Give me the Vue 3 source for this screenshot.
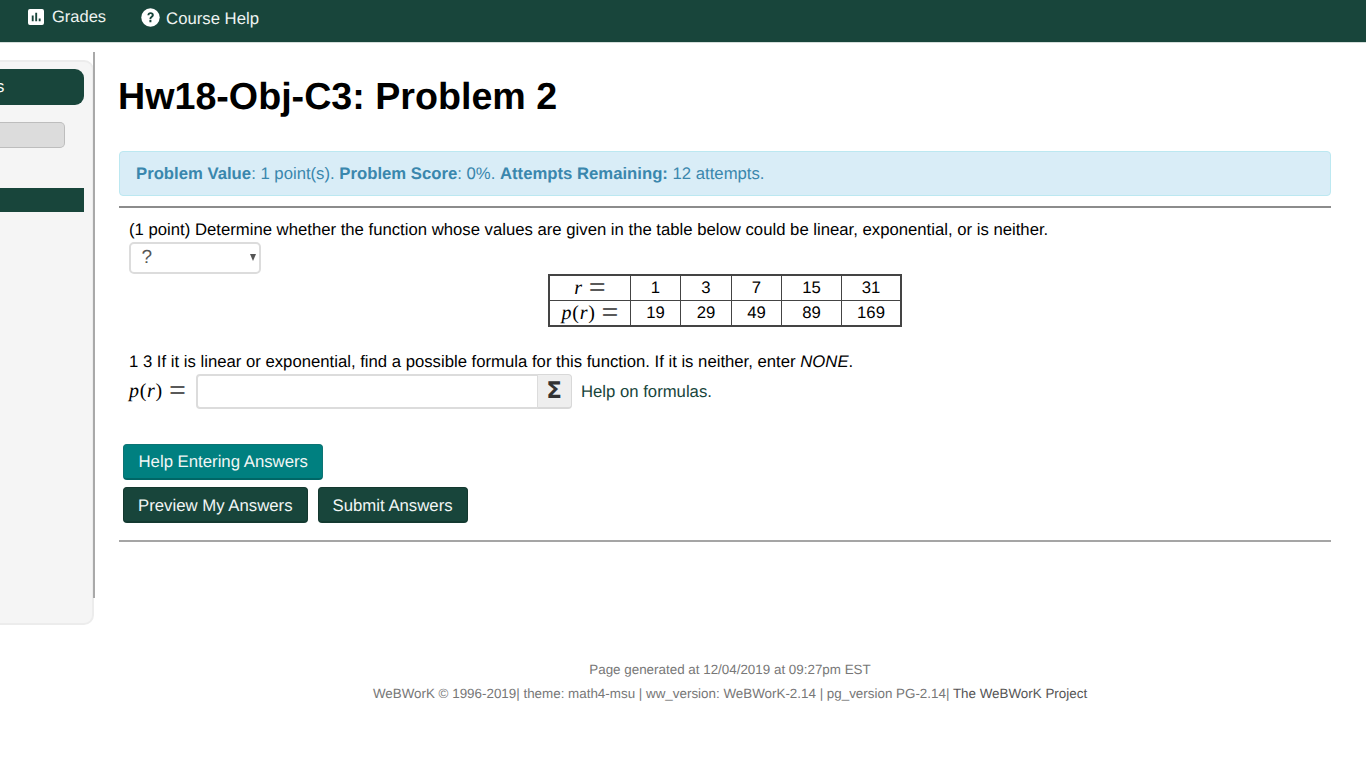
<script setup>
const cols = [
  ['1', '19'],
  ['3', '29'],
  ['7', '49'],
  ['15', '89'],
  ['31', '169'],
]
</script>

<template>
  <div class="page">
    <header class="topbar">
      <a class="nav nav-grades">
        <svg class="ico" width="16" height="16" viewBox="0 0 17 17">
          <path fill="#fff" fill-rule="evenodd" d="M2 0h13a2 2 0 0 1 2 2v13a2 2 0 0 1-2 2H2a2 2 0 0 1-2-2V2a2 2 0 0 1 2-2zM4 7v6h2V7zM7.700 4v9h2V4zM11.400 10v3h2v-3z" />
        </svg>
        <span>Grades</span>
      </a>
      <a class="nav nav-help">
        <svg class="ico" width="19" height="19" viewBox="0 0 19 19">
          <circle cx="9.500" cy="9.500" r="9.200" fill="#fff" />
          <path d="M6.400 7.300c.1-2 1.400-3 3.200-3 1.900 0 3.200 1.100 3.200 2.700 0 1.200-.7 1.800-1.500 2.400-.8.6-1 .9-1 1.800H8.500c0-1.400.3-2 1.200-2.700.7-.5 1.100-.9 1.100-1.500 0-.7-.5-1.100-1.200-1.100-.8 0-1.200.5-1.300 1.400zM8.400 12h2v2.200h-2z" fill="#18453b" />
        </svg>
        <span class="help-text">Course Help</span>
      </a>
    </header>

    <div class="body-row">
      <aside class="sidebar">
        <div class="side-panel">
          <div class="side-head"><span>s</span></div>
          <div class="side-btn"></div>
          <div class="side-active"></div>
        </div>
      </aside>

      <main class="content">
        <h1 class="title">Hw18-Obj-C3: Problem 2</h1>
        <div class="alert">
          <b>Problem Value</b>: 1 point(s). <b>Problem Score</b>: 0%. <b>Attempts Remaining:</b> 12 attempts.
        </div>
        <div class="problem">
          <p class="line">(1 point) Determine whether the function whose values are given in the table below could be linear, exponential, or is neither.</p>
          <div class="select"><span>?</span><i class="caret"></i></div>
          <table class="values">
            <tbody>
              <tr>
                <td class="head"><span class="math"><i>r</i><span class="eq">=</span></span></td>
                <td v-for="c in cols" :key="c[0]" class="cell" :class="'w' + c[0]">{{ c[0] }}</td>
              </tr>
              <tr>
                <td class="head"><span class="math"><i>p</i>(<i>r</i>)<span class="eq">=</span></span></td>
                <td v-for="c in cols" :key="c[1]" class="cell">{{ c[1] }}</td>
              </tr>
            </tbody>
          </table>
          <p class="line line-two">1 3 If it is linear or exponential, find a possible formula for this function. If it is neither, enter <i>NONE</i>.</p>
          <div class="answer">
            <span class="math answer-label"><i>p</i>(<i>r</i>)<span class="eq">=</span></span>
            <div class="input"></div>
            <div class="sigma">Σ</div>
            <a class="help-link">Help on formulas.</a>
          </div>
        </div>
        <div class="actions">
          <div class="btn teal">Help Entering Answers</div>
          <div class="btn-row">
            <div class="btn dark">Preview My Answers</div>
            <div class="btn dark">Submit Answers</div>
          </div>
        </div>
        <hr class="rule" />
      </main>
    </div>

    <footer class="footer">
      <p>Page generated at 12/04/2019 at 09:27pm EST</p>
      <p>WeBWorK © 1996-2019| theme: math4-msu | ww_version: WeBWorK-2.14 | pg_version PG-2.14| <a>The WeBWorK Project</a></p>
    </footer>
  </div>
</template>

<style>
html, body { margin: 0; background: #fff; }
</style>

<style scoped>
.page {
  width: 1366px;
  height: 768px;
  overflow: hidden;
  font-family: "Liberation Sans", Arial, sans-serif;
  font-size: 16.72px;
  text-rendering: geometricPrecision;
  color: #000;
}
.topbar {
  height: 42px;
  background: #18453b;
  border-bottom: 1px solid #d5dedb;
  display: flex;
}
.nav { display: flex; align-items: center; color: #eef3f1; }
.nav-grades { margin-left: 28px; height: 34px; gap: 8px; font-size: 16.500px; }
.nav-help { margin-left: 35px; height: 35px; gap: 6px; }
.help-text { position: relative; top: 1px; }
.body-row { display: flex; height: 582px; }
.sidebar {
  width: 94px;
  flex: none;
  height: 582px;
  position: relative;
}
.sidebar::after {
  content: "";
  position: absolute;
  left: 93px;
  top: 9px;
  width: 2px;
  height: 546px;
  background: #a9a9a9;
}
.side-panel {
  width: 94px;
  height: 565px;
  margin-top: 17px;
  background: #f5f5f5;
  border: 2px solid #ececec;
  border-left: 0;
  border-radius: 0 10px 10px 0;
  padding-top: 7px;
  box-sizing: border-box;
}
.side-head {
  width: 84px;
  height: 36px;
  background: #18453b;
  border-radius: 0 9px 9px 0;
  color: #fff;
  display: flex;
  align-items: center;
  padding-bottom: 1px;
  box-sizing: border-box;
}
.side-head span { margin-left: -4px; }
.side-btn {
  width: 65px;
  height: 26px;
  margin-top: 17px;
  background: #dcdcdc;
  border: 1px solid #bdbdbd;
  border-left: 0;
  border-radius: 0 5px 5px 0;
  box-sizing: border-box;
}
.side-active {
  width: 84px;
  height: 24px;
  margin-top: 40px;
  background: #18453b;
}
.content {
  width: 1212px;
  margin-left: 25px;
  flex: none;
}
.title {
  margin: 31px 0 0 -1px;
  font-size: 37.650px;
  line-height: 44px;
  font-weight: 700;
}
.alert {
  margin-top: 33px;
  height: 45px;
  box-sizing: border-box;
  background: #d9edf7;
  border: 1px solid #bce8f1;
  border-radius: 4px;
  padding: 0 16px;
  line-height: 43px;
  color: #3a87ad;
}
.problem {
  margin-top: 10px;
  border-top: 2px solid #8c8c8c;
  padding: 11px 10px 0;
}
.line { margin: 0; line-height: 22px; }
.select {
  width: 132px;
  height: 32px;
  margin-top: 1px;
  box-sizing: border-box;
  border: 2px solid #dcdcdc;
  border-radius: 5px;
  display: flex;
  align-items: center;
  justify-content: space-between;
  padding: 0 3px 1px 10.500px;
  font-size: 19px;
  color: #555;
}
.caret {
  width: 0;
  height: 0;
  border-left: 3.500px solid transparent;
  border-right: 3.500px solid transparent;
  border-top: 7px solid #555;
}
.values {
  border-collapse: collapse;
  table-layout: fixed;
  margin: 0 0 0 419px;
  width: 351px;
  border: 2px solid #444;
}
.values td {
  border: 1px solid #444;
  text-align: center;
  padding: 0;
  height: 24px;
  line-height: 20px;
}
.values td.head { width: 80px; }
.values td.w1, .values td.w7 { width: 49px; }
.values td.w3 { width: 50px; }
.values td.w15 { width: 59px; }
.values td.w31 { width: 58px; }
.math {
  font-family: "Liberation Serif", serif;
  font-size: 20px;
  letter-spacing: 0.7px;
  white-space: pre;
}
.eq {
  font-size: 30px;
  line-height: 18px;
  font-weight: 400;
  margin-left: 6px;
  letter-spacing: 0;
  vertical-align: -3px;
  color: #333;
}
.line-two { margin-top: 24px; }
.answer { display: flex; align-items: center; height: 35px; margin-top: 1px; }
.answer-label { width: 67px; flex: none; }
.input {
  width: 342px;
  height: 35px;
  box-sizing: border-box;
  background: #fff;
  border: 2px solid #dcdcdc;
  border-right-width: 1px;
  border-radius: 4px 0 0 4px;
}
.sigma {
  width: 34px;
  height: 35px;
  box-sizing: border-box;
  padding-right: 1px;
  background: #eee;
  border: 1px solid #d8d8d8;
  border-bottom-width: 2px;
  border-left: 0;
  border-radius: 0 4px 4px 0;
  text-align: center;
  font-family: "DejaVu Sans", sans-serif;
  font-weight: 700;
  font-size: 23px;
  line-height: 32px;
  color: #333;
}
.help-link { margin-left: 9px; color: #18453b; }
.actions {
  margin-top: 35px;
  margin-left: 4px;
  display: flex;
  flex-direction: column;
  align-items: flex-start;
  gap: 7px;
  font-size: 16.75px;
}
.btn-row { display: flex; gap: 10px; }
.btn {
  height: 36px;
  box-sizing: border-box;
  border-radius: 4px;
  color: #f2f6f5;
  line-height: 33px;
  white-space: nowrap;
}
.teal {
  padding: 0 14.500px;
  background: #008080;
  border: 1px solid #0d7474;
  border-bottom: 2px solid #066;
}
.dark {
  padding: 0 14px;
  line-height: 35px;
  background: #18453b;
  border: 1px solid #14382f;
  border-bottom: 2px solid #133a31;
}
.rule {
  margin: 17px 0 0;
  border: 0;
  border-top: 2px solid #a5a5a5;
}
.footer {
  margin-top: 33px;
  text-align: center;
  font-size: 13.4px;
  color: #777;
  padding-left: 94px;
  line-height: 24px;
}
.footer p { margin: 0; }
.footer a { color: #555; }
</style>
